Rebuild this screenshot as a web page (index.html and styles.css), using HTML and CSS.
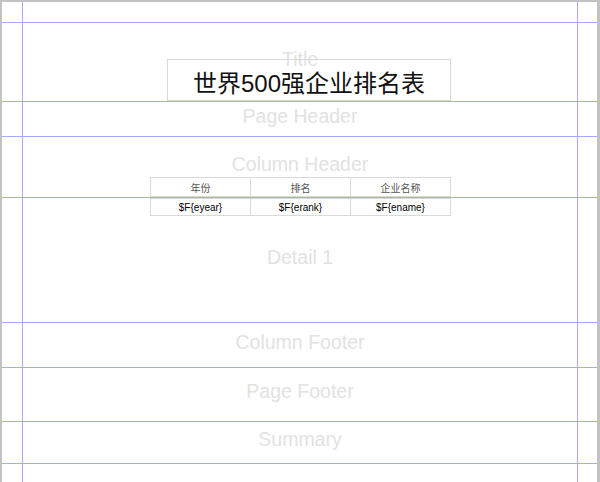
FILE: index.html
```html
<!DOCTYPE html>
<html>
<head>
<meta charset="utf-8">
<link rel="stylesheet" href="styles.css">
</head>
<body>
<div class="canvas">
  <div class="band b-top"><div class="side"></div><div class="main"></div><div class="side-r"></div></div>
  <div class="band b-title">
    <div class="side"></div>
    <div class="main">
      <span class="label">Title</span>
      <div class="el title-box">世界500强企业排名表</div>
    </div>
    <div class="side-r"></div>
  </div>
  <div class="band b-ph"><div class="side"></div><div class="main"><span class="label">Page Header</span></div><div class="side-r"></div></div>
  <div class="band b-ch">
    <div class="side"></div>
    <div class="main">
      <span class="label">Column Header</span>
      <div class="el hcell c1">年份</div>
      <div class="el hcell c2">排名</div>
      <div class="el hcell c3">企业名称</div>
    </div>
    <div class="side-r"></div>
  </div>
  <div class="band b-detail">
    <div class="side"></div>
    <div class="main">
      <span class="label">Detail 1</span>
      <div class="el dcell c1">$F{eyear}</div>
      <div class="el dcell c2">$F{erank}</div>
      <div class="el dcell c3">$F{ename}</div>
    </div>
    <div class="side-r"></div>
  </div>
  <div class="band b-cf"><div class="side"></div><div class="main"><span class="label">Column Footer</span></div><div class="side-r"></div></div>
  <div class="band b-pf"><div class="side"></div><div class="main"><span class="label">Page Footer</span></div><div class="side-r"></div></div>
  <div class="band b-sum"><div class="side"></div><div class="main"><span class="label">Summary</span></div><div class="side-r"></div></div>
  <div class="band b-bottom"><div class="side"></div><div class="main"></div><div class="side-r"></div></div>
</div>
</body>
</html>
```

FILE: styles.css
```css
html, body {
  margin: 0;
  padding: 0;
  background: #ffffff;
  overflow: hidden;
}
.canvas {
  width: 600px;
  height: 482px;
  box-sizing: border-box;
  border-top: 2px solid #c3c3c3;
  border-left: 2px solid #c3c3c3;
  border-right: 3px solid #c3c3c3;
  display: flex;
  flex-direction: column;
  font-family: "Liberation Sans", Arial, "Noto Sans CJK SC", sans-serif;
}
.band {
  display: grid;
  grid-template-columns: 21px 1fr 20px;
  border-bottom: 1px solid #a9a9fb;
  flex: none;
}
.side { border-right: 1px solid #a9a9fb; }
.side-r { border-left: 1px solid #a9a9fb; }
.main {
  position: relative;
  display: flex;
  align-items: center;
  justify-content: center;
}
.b-top { height: 20px; }
.b-title { height: 78px; }
.b-ph { height: 34px; }
.b-ch { height: 60px; }
.b-detail { height: 124px; }
.b-cf { height: 44px; }
.b-pf { height: 53px; }
.b-sum { height: 41px; }
.b-bottom { flex: 1; border-bottom: none; }

.label {
  font-size: 19.5px;
  line-height: 22px;
  color: #e2e2e2;
  padding-bottom: 7px;
}
.el {
  position: absolute;
  box-sizing: border-box;
  border: 1px solid #d9d9d9;
  display: flex;
  align-items: center;
  justify-content: center;
}
.title-box {
  left: 144px;
  top: 36px;
  width: 284px;
  height: 42px;
  font-size: 24px;
  color: #111;
  padding-top: 3px;
  font-family: "Liberation Sans", "Noto Sans CJK SC", sans-serif;
}
.c1 { left: 127px; }
.c2 { left: 227px; }
.c3 { left: 327px; }
.hcell {
  top: 40px;
  width: 101px;
  height: 20px;
  font-size: 10px;
  color: #555;
  font-family: "Noto Sans CJK SC", sans-serif;
}
.dcell {
  top: 0;
  width: 101px;
  height: 18px;
  font-size: 10px;
  color: #000;
}
```
